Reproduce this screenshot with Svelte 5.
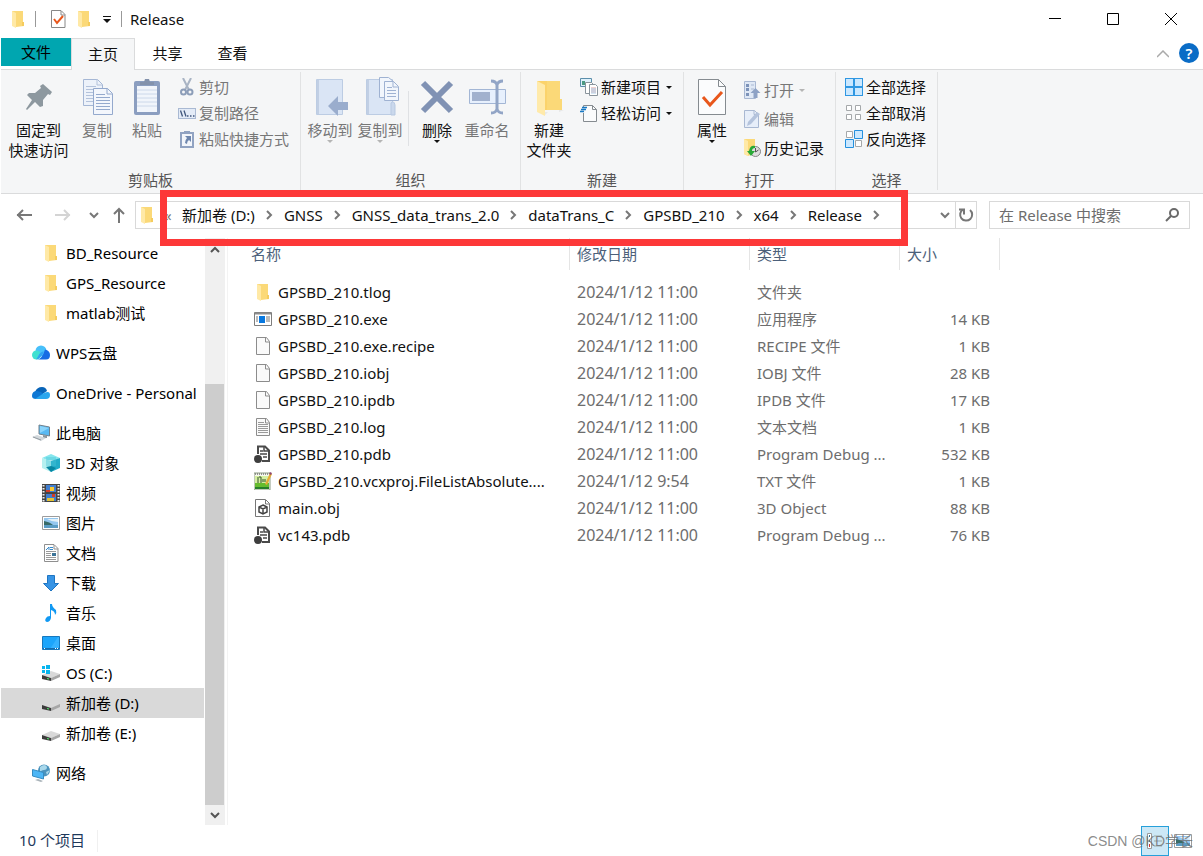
<script lang="ts">
  interface Place {
    label: string;
    icon: string;
    depth: number;
    gap?: boolean;
  }

  interface FileRow {
    name: string;
    icon: string;
    date: string;
    type: string;
    size: string;
  }

  const crumbs = ['新加卷 (D:)', 'GNSS', 'GNSS_data_trans_2.0', 'dataTrans_C', 'GPSBD_210', 'x64', 'Release'];

  const places: Place[] = [
    { label: 'BD_Resource', icon: 'folder', depth: 2 },
    { label: 'GPS_Resource', icon: 'folder', depth: 2 },
    { label: 'matlab测试', icon: 'folder', depth: 2 },
    { label: 'WPS云盘', icon: 'wps', depth: 1, gap: true },
    { label: 'OneDrive - Personal', icon: 'onedrive', depth: 1, gap: true },
    { label: '此电脑', icon: 'pc', depth: 1, gap: true },
    { label: '3D 对象', icon: 'cube', depth: 2 },
    { label: '视频', icon: 'video', depth: 2 },
    { label: '图片', icon: 'picture', depth: 2 },
    { label: '文档', icon: 'document', depth: 2 },
    { label: '下载', icon: 'download', depth: 2 },
    { label: '音乐', icon: 'music', depth: 2 },
    { label: '桌面', icon: 'desktop', depth: 2 },
    { label: 'OS (C:)', icon: 'osdrive', depth: 2 },
    { label: '新加卷 (D:)', icon: 'drive', depth: 2 },
    { label: '新加卷 (E:)', icon: 'drive', depth: 2 },
    { label: '网络', icon: 'network', depth: 1, gap: true },
  ];

  const files: FileRow[] = [
    { name: 'GPSBD_210.tlog', icon: 'folder', date: '2024/1/12 11:00', type: '文件夹', size: '' },
    { name: 'GPSBD_210.exe', icon: 'exe', date: '2024/1/12 11:00', type: '应用程序', size: '14 KB' },
    { name: 'GPSBD_210.exe.recipe', icon: 'blank', date: '2024/1/12 11:00', type: 'RECIPE 文件', size: '1 KB' },
    { name: 'GPSBD_210.iobj', icon: 'blank', date: '2024/1/12 11:00', type: 'IOBJ 文件', size: '28 KB' },
    { name: 'GPSBD_210.ipdb', icon: 'blank', date: '2024/1/12 11:00', type: 'IPDB 文件', size: '17 KB' },
    { name: 'GPSBD_210.log', icon: 'text', date: '2024/1/12 11:00', type: '文本文档', size: '1 KB' },
    { name: 'GPSBD_210.pdb', icon: 'pdb', date: '2024/1/12 11:00', type: 'Program Debug ...', size: '532 KB' },
    { name: 'GPSBD_210.vcxproj.FileListAbsolute....', icon: 'notepad', date: '2024/1/12 9:54', type: 'TXT 文件', size: '1 KB' },
    { name: 'main.obj', icon: 'obj', date: '2024/1/12 11:00', type: '3D Object', size: '88 KB' },
    { name: 'vc143.pdb', icon: 'pdb', date: '2024/1/12 11:00', type: 'Program Debug ...', size: '76 KB' },
  ];

  let selected = $state('新加卷 (D:)');
  let query = $state('');
</script>

<!-- 18px icons -->
{#snippet icon(name: string)}
  <svg class="icon" viewBox="0 0 18 18" width="18" height="18" aria-hidden="true">
    {#if name === 'folder'}
      <path d="M3 1h11v11h1v4l-8 1-4-2z" fill="#fbd978" />
      <path d="M13 12h2v4h-2z" fill="#f5cc5e" />
      <path d="M3 1l4 2v15l-4-2z" fill="#ffe9a6" />
    {:else if name === 'check'}
      <path d="M2.500 .5h9.500l4 4v13H2.500z" fill="#fff" stroke="#888" />
      <path d="M12 1v4h4" fill="none" stroke="#888" />
      <path d="M5 9l3 4 6-7" fill="none" stroke="#e8571c" stroke-width="2" />
    {:else if name === 'cut'}
      <path d="M5 0l6 12M13 0L7 12" stroke="#a9b4c4" stroke-width="2" fill="none" />
      <circle cx="5.500" cy="14" r="2.500" fill="none" stroke="#8c9db8" stroke-width="2" />
      <circle cx="12" cy="14" r="2.500" fill="none" stroke="#8c9db8" stroke-width="2" />
    {:else if name === 'path'}
      <rect x=".5" y="4.500" width="17" height="10" fill="#e3ebf7" stroke="#a9b9d3" />
      <path d="M2.500 6.500l2 6M6 6.500l2 6" stroke="#40577d" stroke-width="1.300" />
      <path d="M9 12h1.500M12 12h1.500M15 12h1.500" stroke="#40577d" stroke-width="1.500" />
    {:else if name === 'shortcut'}
      <rect x="3" y="3" width="12" height="14" fill="#f3f6fb" stroke="#91a3c2" stroke-width="2" />
      <path d="M6 1h6v3H6z" fill="#91a3c2" />
      <path d="M7 6h6v6l-2-2q-2 1-2 4l-2-1q0-3 2-5z" fill="#6f87ae" />
    {:else if name === 'newitem'}
      <path d="M.5.5h11v8H.5z" fill="#dff1fb" stroke="#5b8eab" />
      <path d="M2 3h3v4H2z" fill="#4b9a83" />
      <path d="M5.500 4.500h6l2 2v9h-8z" fill="#fff" stroke="#8a949c" />
      <path d="M9.500 6.500h6l2 2v9h-8z" fill="#fff" stroke="#8a949c" />
      <path d="M11 10h5M11 12h5M11 14h5" stroke="#e2a3a0" />
      <path d="M11 11h5M11 13h5M11 15h5" stroke="#a9cdea" />
    {:else if name === 'easy'}
      <path d="M3.500 1.500h9l4 4v12h-13z" fill="#fafbfc" stroke="#858b90" />
      <path d="M12.500 1.500v4h4" fill="none" stroke="#858b90" />
      <path d="M0 3h5v6H0z" fill="#f5f6f7" />
      <path d="M2 3.500h5M1 5.500h5M0 7.500h4" stroke="#1979c4" stroke-width="1.300" />
    {:else if name === 'open'}
      <path d="M1.500.5h11v17h-11z" fill="#dfe8f5" stroke="#a9b8d2" />
      <path d="M3 3h3v3H3zM3 7h3v3H3zM3 12h3v3H3z" fill="#7d93b9" />
      <path d="M8 4h3M8 8h3" stroke="#a9b8d2" />
      <path d="M12.500 7l5 5h-3v5h-4v-5h-3z" fill="#8ea2c5" />
    {:else if name === 'edit'}
      <path d="M1.500.5h10l4 4v13h-14z" fill="#e7eef9" stroke="#a9b8d2" />
      <path d="M11 .5v4h4" fill="none" stroke="#a9b8d2" />
      <path d="M5 12l9-10 3 2-9 10-4 2z" fill="#b4c3dc" />
    {:else if name === 'history'}
      <path d="M1 0h11v14l-7 3-4-2z" fill="#fbd978" />
      <path d="M1 0l4 2v15l-4-2z" fill="#ffe9a6" />
      <circle cx="12.500" cy="12.500" r="5" fill="#ddd" stroke="#858585" />
      <path d="M12.500 9v4l3-2" fill="none" stroke="#555" />
      <path d="M12 7Q7 6 6 12H4l4 5 4-5H9q0-3 3-3z" fill="#28a836" />
    {:else if name === 'selall'}
      <path d="M0 0h18v18H0z" fill="#2f97e2" />
      <path d="M1 1h7v7H1zM10 1h7v7h-7zM1 10h7v7H1zM10 10h7v7h-7z" fill="#cbe8ff" />
    {:else if name === 'selnone'}
      <path d="M1.500 1.500h5v5h-5zM10.500 1.500h5v5h-5zM1.500 10.500h5v5h-5zM10.500 10.500h5v5h-5z" fill="#fff" stroke="#a5a8aa" />
    {:else if name === 'selinv'}
      <path d="M1.500 1.500h6v6h-6zM10.500 10.500h6v6h-6z" fill="#fff" stroke="#a5a8aa" />
      <path d="M9.500.5h8v8h-8zM.5 9.500h8v8h-8z" fill="#cbe8ff" stroke="#2490de" />
    {:else if name === 'wps'}
      <circle cx="9" cy="7" r="5.500" fill="#48c0fa" />
      <circle cx="4.500" cy="11" r="4.500" fill="#40e0d0" />
      <path d="M5 15.500q5 0 8-10 5 1 5 5.500 0 4.500-4 4.500z" fill="#176be4" />
      <path d="M4 15.500q5-1 8-8-4 0-6 5z" fill="#30a1f3" />
    {:else if name === 'onedrive'}
      <path d="M3 8q2-5 7-5 4 0 5 4l-6 4z" fill="#0864b8" />
      <path d="M0 12q0-5 5-5 3 0 7 3l-7 5H4q-4 0-4-3z" fill="#0f78d4" />
      <path d="M3 15l9-6q6-3 6 2 0 4-4 4z" fill="#29a6ee" />
    {:else if name === 'pc'}
      <path d="M7 1l10.500 2v9L7 10z" fill="#59b9f2" stroke="#71818c" />
      <path d="M8 2l9 2-9 5z" fill="#8bd4fb" />
      <path d="M11 11l4 1v2h-4z" fill="#8d979d" />
      <path d="M0 13l5-2 9 3-5 3z" fill="#d2d8dc" />
      <path d="M1 13l8 3" stroke="#929ba1" />
    {:else if name === 'cube'}
      <path d="M0 4l9-4 9 4-5 2H5z" fill="#85e6ed" />
      <path d="M0 4l9 3v11l-9-4z" fill="#b5f0f0" />
      <path d="M9 7l9-3v10l-9 4z" fill="#23acc8" />
      <path d="M4 3h10v9H4z" fill="#49c4d6" opacity=".4" />
      <path d="M4 13l5-1 5 2-5 4z" fill="#0786a1" />
    {:else if name === 'video'}
      <path d="M0 0h18v18H0z" fill="#454545" />
      <path d="M1.500 1v17M16.500 1v17" stroke="#eee" stroke-width="2" stroke-dasharray="1.500 1.500" />
      <path d="M4 1h10v7H4zM4 10h10v7H4z" fill="#407ed0" />
      <path d="M8 3h4v4H8z" fill="#fac833" />
      <path d="M4 6h4v2H4zM10 10h3v3h-3z" fill="#d63b27" />
      <path d="M5 14h7v3H5z" fill="#e4c335" />
    {:else if name === 'picture'}
      <path d="M.5 2.500h17v13H.5z" fill="#fff" stroke="#9c9c9c" />
      <path d="M2 4h14v10H2z" fill="#94c7ef" />
      <path d="M5 5h11v3Q10 8 5 5z" fill="#e2f0f8" />
      <path d="M2 7q6 1 9 4H2z" fill="#386b68" />
      <path d="M2 11h14v3H2z" fill="#5b9cc4" />
    {:else if name === 'document'}
      <path d="M2.500.5h9.500l4 4v13H2.500z" fill="#fff" stroke="#8f8f8f" />
      <path d="M12 1v4h4" fill="none" stroke="#8f8f8f" />
      <path d="M4 6l3-3v3M8 3.500h3M8 5.500h3" fill="none" stroke="#378acb" />
      <path d="M4 7.500h10M4 9.500h5M4 11.500h5M4 13.500h10M4 15.500h10" stroke="#999" />
      <path d="M10 9h4v3h-4z" fill="#3b7498" />
    {:else if name === 'download'}
      <path d="M5.500 1.500h7v8h4L9 17 1.500 9.500h4z" fill="#3794e5" stroke="#1e75c2" />
    {:else if name === 'music'}
      <path d="M8 0h2q0 3 4 6 1 3-1 5 0-4-4-5v8q-1 4-4 4-3-1-1-4 1-2 4-2z" fill="#1199f3" />
    {:else if name === 'desktop'}
      <path d="M.5 2.500h17v13H.5z" fill="#1ca5fb" stroke="#1678be" />
      <path d="M8 15l8-12h1v12z" fill="#35b2ff" />
      <path d="M1 14.500h16" stroke="#156cad" />
      <path d="M2 14.500h1M13 14.500h1M15 14.500h1" stroke="#fff" />
    {:else if name === 'drive' || name === 'osdrive'}
      <path d="M0 11l9-4 9 3-9 4z" fill="#d9d9d9" />
      <path d="M0 11l9 3v3l-9-2z" fill="#3c3c3c" />
      <path d="M9 14l9-4v3l-9 4z" fill="#a6a6a6" />
      <path d="M5 14l2 .5v1l-2-.5z" fill="#4ef16b" />
      {#if name === 'osdrive'}
        <path d="M0 2h3v3H0zM4 1h4v4H4zM0 6h3v3H0zM4 6h4v4H4z" fill="#08b6ef" />
      {/if}
    {:else if name === 'network'}
      <circle cx="12" cy="6.500" r="6" fill="#4b93bd" />
      <path d="M8 3q5-4 7 0 0 3-3 3t-4 3zM14 8l4-2-3 5z" fill="#a9d8eb" />
      <path d="M.5 5.500l11 3v6.500l-11-3z" fill="#4db6f5" stroke="#368cc2" />
      <path d="M3 16l3-1 5 2-2 1z" fill="#aab4ba" />
    {:else if name === 'exe'}
      <path d="M.5 2.500h17v13H.5z" fill="#fff" stroke="#7d7d7d" />
      <path d="M1 3.500h16" stroke="#8c8c8c" stroke-width="2" />
      <path d="M5 6h6v7H5z" fill="#0878df" />
      <path d="M2 7h2M2 9h2M2 11h2M12 7h4M12 9h4M12 11h4" stroke="#777" />
    {:else if name === 'blank' || name === 'text'}
      <path d="M2.500.5h10l3 4v13h-13z" fill="#fafafa" stroke="#8c8c8c" />
      <path d="M11.500 1v4h4" fill="none" stroke="#8c8c8c" />
      {#if name === 'text'}
        <path d="M4 4.500h6M4 6.500h10M4 8.500h10M4 10.500h10M4 12.500h10M4 14.500h10" stroke="#9a9a9a" />
      {/if}
    {:else if name === 'pdb'}
      <path d="M4 9V1.500h7l4 4V16H8" fill="#fff" stroke="#4a4a4a" stroke-width="2" />
      <path d="M10 1v5h5" fill="none" stroke="#4a4a4a" stroke-width="1.500" />
      <path d="M6 6h3M6 9h7M9 12h4" stroke="#4a4a4a" stroke-width="1.500" />
      <circle cx="4" cy="14" r="4" fill="#3e3e3e" />
    {:else if name === 'notepad'}
      <path d="M0 1h16v17H0z" fill="#f6f8ef" stroke="#8a9a83" />
      <path d="M1 4h14v13H1z" fill="#d5f0a0" />
      <path d="M1 11h14v6H1z" fill="#66bc2e" />
      <path d="M1 15h14v2H1z" fill="#268029" />
      <path d="M1 2h14" stroke="#777" stroke-width="1.500" stroke-dasharray="1 1" />
      <path d="M4 5v6M5 5h2v6M9 7v3M11 7v3" stroke="#31502b" fill="none" />
      <path d="M11 12l5-11 2 1-5 11z" fill="#e6ab36" />
      <path d="M16 0l2 1-1 2-2-1z" fill="#8c476f" />
    {:else if name === 'obj'}
      <path d="M1.500.5h10l4 4v13h-14z" fill="#fff" stroke="#777" />
      <path d="M11.500 1v4h4" fill="none" stroke="#777" />
      <path d="M9 6l4 2v5l-4 2-4-2V8zM5 8l4 2 4-2M9 10v5" fill="none" stroke="#444" stroke-width="1.500" />
    {/if}
  </svg>
{/snippet}

<!-- 40px icons of the large ribbon buttons -->
{#snippet bigIcon(name: string)}
  <svg class="big-icon" viewBox="0 0 40 40" width="40" height="40" aria-hidden="true">
    {#if name === 'pin'}
      <path d="M24 7l9 8-2 3-2-1-5 6v6l-3 1-5-5-8 8-1-1 6-9-5-5 2-2 6 0 6-5-1-2z" fill="#8d989f" />
    {:else if name === 'copy'}
      <path d="M6.500 2.500h14l5 5v21h-19z" fill="#edf2fa" stroke="#a5b7d5" />
      <path d="M20 2v6h5M9 9.500h10M9 12.500h14M9 15.500h14M9 18.500h14M9 21.500h14M9 24.500h14" fill="none" stroke="#b3c2db" />
      <path d="M16.500 11.500h14l5 5v21h-19z" fill="#f3f6fc" stroke="#94a9cd" />
      <path d="M30 11v6h5M19 17.500h9M19 20.500h14M19 23.500h14M19 26.500h14M19 29.500h14M19 32.500h14" fill="none" stroke="#94a9cd" />
    {:else if name === 'paste'}
      <rect x="7" y="4" width="26" height="34" rx="2" fill="#8b9ec0" />
      <path d="M10 9h20v26H10z" fill="#f1f5fb" />
      <path d="M10 13h20M10 17h20M10 21h20M10 25h20M10 29h20" stroke="#ccd8ea" />
      <path d="M13 5h4l1-3h4l1 3h4v3H13z" fill="#8392ac" />
    {:else if name === 'moveto' || name === 'copyto'}
      <path d="M6.500 2.500h26v35h-26z" fill="#dae5f5" stroke="#bccce3" />
      <path d="M8 3v34" stroke="#c1cfe4" stroke-width="2" />
      {#if name === 'moveto'}
        <path d="M18 29l10-10v6h10v8H28v6z" fill="#9aadcd" />
      {:else}
        <path d="M31 26q3-3 4 2v10h-4z" fill="#cad8ec" stroke="#b7c8e1" />
        <path d="M19.500.5h9l5 4v16h-14z" fill="#f2f6fc" stroke="#9fb2d2" />
        <path d="M24.500 4.500h9l5 5v14h-14z" fill="#f2f6fc" stroke="#9fb2d2" />
        <path d="M33 5v5h5M27 10.500h5M27 13.500h9M27 16.500h9M27 19.500h9" fill="none" stroke="#9fb2d2" />
      {/if}
    {:else if name === 'delete'}
      <path d="M6 6l28 28M34 6L6 34" stroke="#8092b4" stroke-width="6" />
    {:else if name === 'rename'}
      <path d="M2.500 12.500h36v14h-36z" fill="#e7f0fd" stroke="#a3b6d5" />
      <path d="M5 15h18v9H5z" fill="#a1b1ce" />
      <path d="M24 4q5 0 6 4 1-4 6-4M30 7v26M24 36q5 0 6-4 1 4 6 4" fill="none" stroke="#92a5c6" stroke-width="3" />
    {:else if name === 'newfolder'}
      <path d="M8 4h23v18h2v11H16z" fill="#fbd36b" />
      <path d="M18 4h13v18h2v11H18z" fill="#fbd978" />
      <path d="M8 4l8 4v31l-8-4z" fill="#ffeaaa" />
      <path d="M30 33h5l-5 2zM16 35l3 0-3 3z" fill="#e7e8e7" />
    {:else if name === 'props'}
      <path d="M6.500 2.500h20l7 7v28h-27z" fill="#fbfcfd" stroke="#858b90" />
      <path d="M26.500 2.500v7h7" fill="none" stroke="#858b90" />
      <path d="M11 20l7 8 12-13" fill="none" stroke="#e8571c" stroke-width="3" />
    {/if}
  </svg>
{/snippet}

{#snippet caret()}
  <svg class="caret" viewBox="0 0 6 3" width="6" height="3" aria-hidden="true"><path d="M0 0h6L3 3z" fill="currentColor" /></svg>
{/snippet}

{#snippet chevron(dir: string)}
  <svg class="chevron {dir}" viewBox="0 0 12 12" width="12" height="12" aria-hidden="true">
    <path d="M2 4l4 4 4-4" fill="none" stroke="currentColor" stroke-width="2" />
  </svg>
{/snippet}

{#snippet big(name: string, lines: string[], off = false, menu = false)}
  <button class="big" class:off>
    {@render bigIcon(name)}
    {#each lines as line}<span>{line}</span>{/each}
    {#if menu}{@render caret()}{/if}
  </button>
{/snippet}

{#snippet small(name: string, label: string, off = false, menu = false)}
  <button class="small" class:off>
    {@render icon(name)}
    <span>{label}</span>
    {#if menu}{@render caret()}{/if}
  </button>
{/snippet}

<div class="window">
  <header class="titlebar">
    <div class="quick">
      {@render icon('folder')}
      <span class="bar"></span>
      <button aria-label="属性">{@render icon('check')}</button>
      <button aria-label="新建文件夹">{@render icon('folder')}</button>
      <button class="customize" aria-label="自定义快速访问工具栏">
        <svg viewBox="0 0 8 8" width="8" height="8"><path d="M0 1.500h8" stroke="#111" /><path d="M0 4h8L4 8z" fill="#111" /></svg>
      </button>
      <span class="bar"></span>
    </div>
    <h1>Release</h1>
    <div class="controls">
      <button aria-label="最小化"><svg viewBox="0 0 12 12" width="12" height="12"><path d="M0 5.500h12" stroke="#000" /></svg></button>
      <button aria-label="最大化"><svg viewBox="0 0 12 12" width="12" height="12"><path d="M.5.5h11v11H.5z" fill="none" stroke="#000" /></svg></button>
      <button aria-label="关闭"><svg viewBox="0 0 12 12" width="12" height="12"><path d="M0 0l12 12M12 0L0 12" stroke="#000" /></svg></button>
    </div>
  </header>

  <nav class="tabs">
    <button class="tab file">文件</button>
    <button class="tab active">主页</button>
    <button class="tab">共享</button>
    <button class="tab">查看</button>
    <button class="collapse" aria-label="最小化功能区">
      <svg viewBox="0 0 12 8" width="12" height="8"><path d="M0 7l6-6 6 6" fill="none" stroke="#aaa" stroke-width="1.500" /></svg>
    </button>
    <button class="help" aria-label="帮助">?</button>
  </nav>

  <div class="ribbon">
    <section class="group clipboard">
      <div class="tools">
        <div class="wide">{@render big('pin', ['固定到', '快速访问'])}</div>
        {@render big('copy', ['复制'], true)}
        {@render big('paste', ['粘贴'], true)}
        <div class="stack">
          {@render small('cut', '剪切', true)}
          {@render small('path', '复制路径', true)}
          {@render small('shortcut', '粘贴快捷方式', true)}
        </div>
      </div>
      <h2>剪贴板</h2>
    </section>
    <section class="group organize">
      <div class="tools">
        {@render big('moveto', ['移动到'], true, true)}
        {@render big('copyto', ['复制到'], true, true)}
        <span class="divider"></span>
        {@render big('delete', ['删除'], false, true)}
        {@render big('rename', ['重命名'], true)}
      </div>
      <h2>组织</h2>
    </section>
    <section class="group">
      <div class="tools">
        {@render big('newfolder', ['新建', '文件夹'])}
        <div class="stack">
          {@render small('newitem', '新建项目', false, true)}
          {@render small('easy', '轻松访问', false, true)}
        </div>
      </div>
      <h2>新建</h2>
    </section>
    <section class="group">
      <div class="tools">
        {@render big('props', ['属性'], false, true)}
        <div class="stack loose">
          {@render small('open', '打开', true, true)}
          {@render small('edit', '编辑', true)}
          {@render small('history', '历史记录')}
        </div>
      </div>
      <h2>打开</h2>
    </section>
    <section class="group">
      <div class="tools">
        <div class="stack">
          {@render small('selall', '全部选择')}
          {@render small('selnone', '全部取消')}
          {@render small('selinv', '反向选择')}
        </div>
      </div>
      <h2>选择</h2>
    </section>
  </div>

  <div class="location">
    <div class="nav-buttons">
      <button aria-label="返回"><svg viewBox="0 0 16 16" width="16" height="16"><path d="M16 8H1M7 3L2 8l5 5" fill="none" stroke="#777" stroke-width="2" /></svg></button>
      <button aria-label="前进"><svg viewBox="0 0 16 16" width="16" height="16"><path d="M0 8h15M9 3l5 5-5 5" fill="none" stroke="#d4d4d4" stroke-width="2" /></svg></button>
      <button class="recent" aria-label="最近浏览的位置">{@render chevron('down')}</button>
      <button class="up" aria-label="上移"><svg viewBox="0 0 16 16" width="16" height="16"><path d="M8 16V2M3 7l5-5 5 5" fill="none" stroke="#777" stroke-width="2" /></svg></button>
    </div>
    <div class="address">
      {@render icon('folder')}
      <span class="more">«</span>
      <ol>
        {#each crumbs as crumb}
          <li><a href="#{crumb}">{crumb}</a>{@render chevron('right')}</li>
        {/each}
      </ol>
      <button class="history" aria-label="以前的位置">{@render chevron('down')}</button>
      <button class="refresh" aria-label="刷新">
        <svg viewBox="0 0 16 16" width="16" height="16"><path d="M5 2.500A6 6 0 1 0 12 3M1 2.500h5v5" fill="none" stroke="#777" stroke-width="2" /></svg>
      </button>
      <div class="highlight"></div>
    </div>
    <label class="search">
      <input type="text" aria-label="搜索" placeholder="在 Release 中搜索" bind:value={query} />
      <svg viewBox="0 0 14 14" width="14" height="14" aria-hidden="true">
        <circle cx="9" cy="5" r="4" fill="none" stroke="#6a6a6a" stroke-width="2" /><path d="M6 8l-5 5" stroke="#6a6a6a" stroke-width="2" />
      </svg>
    </label>
  </div>

  <main>
    <aside>
      <ul>
        {#each places as place}
          <li class:gap={place.gap}>
            <button
              class="place"
              class:nested={place.depth === 2}
              class:selected={place.label === selected}
              onclick={() => (selected = place.label)}
            >
              {@render icon(place.icon)}
              <span>{place.label}</span>
            </button>
          </li>
        {/each}
      </ul>
      <div class="scrollbar">
        <button class="scroll-up" aria-label="向上滚动">{@render chevron('top')}</button>
        <span class="track"></span>
        <span class="thumb"></span>
        <button aria-label="向下滚动">{@render chevron('down')}</button>
      </div>
    </aside>

    <div class="files">
      <table>
        <colgroup><col class="c-name" /><col class="c-date" /><col class="c-type" /><col class="c-size" /></colgroup>
        <thead>
          <tr><th>名称</th><th>修改日期</th><th>类型</th><th>大小</th></tr>
        </thead>
        <tbody>
          {#each files as file}
            <tr>
              <td class="name"><div>{@render icon(file.icon)}<span>{file.name}</span></div></td>
              <td class="date">{file.date}</td>
              <td>{file.type}</td>
              <td class="size">{file.size}</td>
            </tr>
          {/each}
        </tbody>
      </table>
    </div>
  </main>

  <footer>
    <span class="count">{files.length} 个项目</span>
    <div class="views">
      <button class="on" aria-label="详细信息">
        <svg viewBox="0 0 18 18" width="18" height="18">
          <path d="M1.500 1.500h4v15h-4z" fill="#fff" stroke="#999" /><path d="M3.500 3v2M3.500 8v2" stroke="#3b7498" /><path d="M3.500 12v3" stroke="#c33" />
          <path d="M8 4h8M8 9h8M8 14h8" stroke="#9aa" />
        </svg>
      </button>
      <button aria-label="大缩略图">{@render icon('picture')}</button>
      <span class="credit">CSDN @KD学长</span>
    </div>
  </footer>
</div>

<style>
  :global(body) { margin: 0; background: #fff; }

  .window {
    display: flex; flex-direction: column;
    min-height: 100vh; box-sizing: border-box; padding-left: 1px;
    background: #fff; color: #111;
    font-family: "Noto Sans", "Noto Sans CJK SC", sans-serif;
    font-size: 15px; line-height: 20px;
  }

  button {
    border: 0; padding: 0; margin: 0; background: none;
    font: inherit; color: inherit;
    display: flex; align-items: center; justify-content: center;
  }
  h1, h2 { margin: 0; font-size: 15px; font-weight: 400; }
  ul, ol { list-style: none; margin: 0; padding: 0; }
  svg { flex-shrink: 0; }

  /* Title bar */
  .titlebar { display: flex; align-items: center; height: 38px; }
  .quick { display: flex; align-items: center; gap: 8px; padding: 0 8px; }
  .quick .bar { width: 1px; height: 16px; background: #999; }
  .quick .bar + button { margin-left: 5px; }
  .customize { width: 12px; }
  .controls { display: flex; margin-left: auto; padding-right: 3px; }
  .controls button { width: 58px; height: 38px; }

  /* Ribbon tabs */
  .tabs { display: flex; height: 31px; border-bottom: 1px solid #dadbdc; }
  .tab { box-sizing: border-box; width: 65px; height: 31px; padding-bottom: 2px; }
  .tab.file { width: 70px; height: 28px; padding: 0; background: #00a6b0; color: #000; }
  .tab.active {
    width: 64px; height: 32px;
    background: #f5f6f7; border: 1px solid #dadbdc; border-bottom: 0;
  }
  .collapse { margin-left: auto; width: 32px; }
  .help {
    width: 20px; height: 20px; margin: 5px 4px 0 0; border-radius: 50%;
    background: #0a6cc6; color: #fff; font-weight: 600;
  }

  /* Ribbon */
  .ribbon { display: flex; height: 123px; background: #f5f6f7; border-bottom: 1px solid #dadbdc; }
  .group {
    display: flex; flex-direction: column;
    margin: 2px 0 3px; border-right: 1px solid #e1e2e3;
  }
  .tools { display: flex; flex: 1; padding: 0 11px 0 3px; }
  .clipboard .tools { padding-left: 4px; }
  .organize .tools { padding: 0 8px 0 4px; }
  .group h2 { text-align: center; color: #555; line-height: 20px; }
  .big {
    flex-direction: column; justify-content: flex-start;
    width: 50px; padding-top: 5px; white-space: nowrap;
  }
  .wide { display: flex; justify-content: center; width: 67px; }
  .big-icon { margin-bottom: 3px; }
  .off { color: #777; }
  .off .caret { color: #b5b5b5; }
  .stack { display: flex; flex-direction: column; padding-top: 2px; margin-left: 6px; }
  .stack.loose { gap: 3px; padding-top: 5px; }
  .small { justify-content: flex-start; height: 26px; gap: 3px; }
  .small .caret { margin-left: 2px; }
  .divider { width: 1px; height: 55px; margin: 19px 3px 0; background: #dfe1e4; }

  /* Address and search */
  .location { display: flex; align-items: center; height: 42px; padding: 0 13px 2px 0; }
  .nav-buttons { display: flex; align-items: center; width: 134px; box-sizing: border-box; padding-left: 15px; color: #777; }
  .nav-buttons button { margin-right: 23px; }
  .nav-buttons .recent, .nav-buttons .up { margin-right: 11px; }
  .nav-buttons .recent { margin-left: -6px; }
  .address, .search { box-sizing: border-box; height: 28px; border: 1px solid #d9d9d9; }
  .address { position: relative; display: flex; align-items: center; flex: 1; padding-left: 2px; color: #777; }
  .more { width: 22px; margin-left: 8px; font-size: 15px; }
  .address ol { display: flex; flex: 1; margin-left: -4px; }
  .address li { display: flex; align-items: center; white-space: nowrap; }
  .address a { color: #111; text-decoration: none; }
  .address .right { margin: 0 9px 0 8px; }
  .address .history { width: 20px; }
  .refresh { width: 21px; height: 26px; border-left: 1px solid #d9d9d9; }
  .highlight {
    position: absolute; z-index: 1; top: -12px; left: 24px; right: 68px; height: 42px;
    border: 7px solid #fd3838; pointer-events: none;
  }
  .search { display: flex; align-items: center; width: 201px; margin-left: 12px; padding: 0 10px 0 9px; }
  .search input {
    flex: 1; min-width: 0; padding: 0; border: 0; outline: 0;
    background: none; font: inherit; color: #111;
  }
  .search input::placeholder { color: #6d6d6d; opacity: 1; }

  .chevron.right { transform: rotate(-90deg); }
  .chevron.top { transform: rotate(180deg); }

  /* Folder tree */
  main { display: flex; flex: 1; }
  aside { display: flex; border-right: 1px solid #f3f3f3; padding-right: 2px; }
  aside ul { width: 203px; }
  li.gap { margin-top: 10px; }
  .place {
    justify-content: flex-start; gap: 6px; width: 100%; height: 30px;
    padding-left: 31px; white-space: nowrap; color: #000;
  }
  .place.nested { padding-left: 41px; }
  .selected { background: #d9d9d9; }
  .scrollbar { display: flex; flex-direction: column; width: 20px; margin-left: 1px; background: #f0f0f0; color: #555; }
  .scrollbar button { box-sizing: border-box; height: 20px; }
  .scrollbar .scroll-up { padding-top: 3px; }
  .track { flex: 3; }
  .thumb { flex: 10; margin-right: 1px; background: #cdcdcd; }

  /* File list */
  .files { flex: 1; padding-left: 16px; }
  table { width: 756px; table-layout: fixed; border-collapse: separate; border-spacing: 0; }
  .c-name { width: 326px; }
  .c-date { width: 180px; }
  .c-type { width: 150px; }
  .c-size { width: 100px; }
  th {
    height: 32px; padding: 0 0 0 7px; box-sizing: border-box;
    border-right: 1px solid #e5e5e5; text-align: left; font-weight: 400; color: #4c607a;
  }
  tbody::before { content: ""; display: block; height: 8px; }
  td { height: 27px; padding: 0 0 0 7px; box-sizing: border-box; color: #6d6d6d; white-space: nowrap; }
  td.name { color: #111; padding-left: 10px; }
  td.name div { display: flex; align-items: center; gap: 6px; }
  td.date { font-size: 16px; }
  td.size { text-align: right; padding-right: 10px; }

  /* Status bar */
  footer { display: flex; align-items: center; height: 31px; padding: 0 6px 0 18px; }
  .count { padding: 0 12px 2px 0; border-right: 1px solid #f0f0f0; color: #1e395b; }
  .views { position: relative; display: flex; align-items: center; margin-left: auto; }
  .views button { width: 28px; height: 30px; box-sizing: border-box; }
  .views .on { background: #cce8f6; border: 1px solid #26a0da; }
  .credit {
    position: absolute; right: 4px; white-space: nowrap; pointer-events: none;
    font-family: "Liberation Sans", "Noto Sans CJK SC", sans-serif; font-size: 14px;
    color: rgba(110, 110, 110, 0.8);
  }
</style>
